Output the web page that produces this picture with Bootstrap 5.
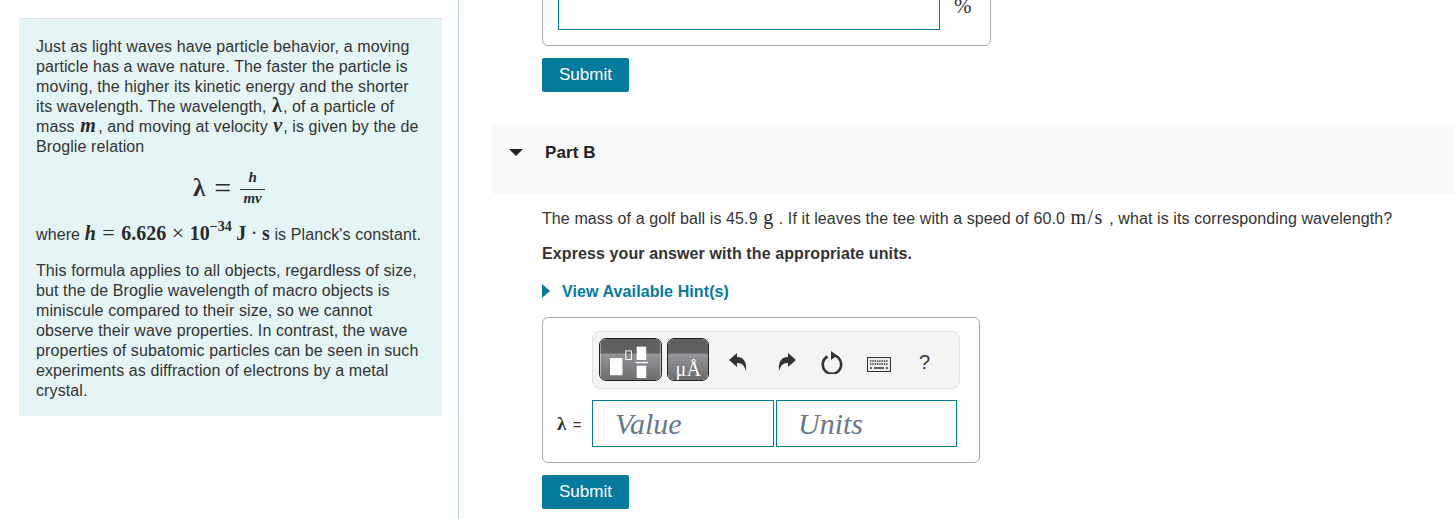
<!DOCTYPE html>
<html lang="en">
<head>
  <meta charset="UTF-8" />
  <title>Part B</title>
  <link rel="stylesheet" href="https://cdn.jsdelivr.net/npm/bootstrap@5.3.0/dist/css/bootstrap.min.css" />
  <script src="https://cdn.jsdelivr.net/npm/bootstrap@5.3.0/dist/js/bootstrap.bundle.min.js"></script>
  <style>
    html, body { height: 519px; overflow: hidden; }
    body { font-family: "Liberation Sans", Arial, sans-serif; font-size: 16px; line-height: 20px; letter-spacing: .1px; color: #333; background: #fff; }
    .side-col { width: 459px; height: 519px; flex: none; border-right: 1px solid #b8cbe0; padding: 18px 16px 0 19px; }
    .intro-panel { background: #e5f5f6; border-top: 1px solid #dce3e6; padding: 18px 15px 15px 17px; height: 398px; }
    .intro-panel p { margin: 0; }
    .tex { font-family: "Liberation Serif", "Times New Roman", serif; font-size: 20px; line-height: 0; color: #2b2b2b; letter-spacing: 0; }
    .tex-i { font-style: italic; font-weight: 700; }
    .tex-b { font-weight: 700; }
    .tex-var { margin: 0 1px; }
    .tex-wide { margin: 0 1px; letter-spacing: 1.4px; }
    .tex-op { margin: 0 2px; font-size: 22px; }
    .tex-times { margin: 0 1px; font-size: 22px; }
    .tex-sup { font-size: 14px; position: relative; top: -9px; font-weight: 700; }
    .formula { height: 68px; display: flex; justify-content: center; align-items: center; padding: 0 5px 6px 0; }
    .formula-sign { font-size: 25px; line-height: 20px; }
    .formula-eq { font-size: 30px; line-height: 20px; margin-left: 9px; }
    .formula-frac { display: inline-flex; flex-direction: column; align-items: center; width: 25px; margin-left: 9px; font-size: 15px; line-height: 17px; }
    .formula-frac > span:first-child { border-bottom: 1px solid #333; width: 100%; text-align: center; padding-bottom: 3px; }
    .formula-gap { margin-top: 16px !important; }
    .main-col { flex: 1 1 auto; min-width: 0; }
    .body-indent { margin-left: 83px; }
    .answer-box { border: 1px solid #aaa; border-radius: 6px; background: #fff; }
    .answer-top { width: 449px; height: 61px; margin-top: -15px; padding-left: 15px; }
    .answer-top .blank { width: 382px; height: 44px; border: 1px solid #047b9c; flex: none; }
    .answer-top .pct { margin-left: 14px; font-family: "Liberation Serif", serif; font-size: 21px; line-height: 20px; margin-top: 10px; }
    .submit-btn { background: #047b9c; border: 0; border-radius: 2px; color: #fff; font-size: 17px; line-height: 20px; width: 87px; height: 34px; padding: 0; }
    .submit-btn:hover { background: #047b9c; color: #fff; }
    .submit-top { margin-top: 12px; }
    .submit-bottom { margin-top: 12px; }
    .part-head { margin-top: 33px; margin-left: 33px; height: 69px; background: #f9f9f9; padding-top: 18px; font-size: 17px; font-weight: 700; color: #222; }
    .part-caret { width: 14px; height: 7px; margin: 6px 22px 0 17px; flex: none; }
    .question-line { margin: 15px 0 0; white-space: nowrap; }
    .express-line { margin: 15px 0 0; }
    .hint-row { margin-top: 18px; }
    .hint-link { color: #047b9c; font-weight: 700; text-decoration: none; margin-left: 12px; }
    .hint-caret { width: 8px; height: 14px; flex: none; margin-top: 2px; }
    .answer-main { width: 438px; height: 146px; margin-top: 15px; padding: 13px 0 0 49px; position: relative; }
    .tool-strip { width: 368px; height: 58px; background: #f4f4f4; border: 1px solid #e2e2e2; border-radius: 8px; padding: 6px 0 0 6px; }
    .tpl-btn { height: 43px; border: 1px solid #222; border-radius: 7px; flex: none; display: block; }
    .tpl-two { margin-left: 5px; }
    .tool-ico { flex: none; display: block; }
    .ico-undo { margin: 14px 0 0 20px; }
    .ico-redo { margin: 14px 0 0 31px; }
    .ico-reset { margin: 13px 0 0 25px; }
    .ico-keys { margin: 19px 0 0 24px; }
    .tool-help { width: 11px; margin: 12px 0 0 28px; font-size: 20px; line-height: 24px; color: #333; }
    .ans-row { margin-top: 11px; }
    .ans-label { position: absolute; left: 14px; top: 96px; font-size: 15px; }
    .ans-label b { font-family: "Liberation Serif", serif; font-size: 19px; margin-right: 2px; }
    .ans-input.form-control { width: 182px; height: 47px; border: 1px solid #047b9c; border-radius: 0; padding: 0 0 0 22px; font-family: "Liberation Serif", serif; font-style: italic; font-size: 30px; flex: none; background: #fff; }
    .ans-input.form-control::placeholder { color: #66788c; opacity: 1; }
    .ans-input.units-input { margin-left: 2px; width: 181px; padding-left: 21px; }
  </style>
</head>
<body>
  <div class="d-flex">
    <aside class="side-col">
      <div class="intro-panel">
        <p>Just as light waves have particle behavior, a moving particle has a wave nature. The faster the particle is moving, the higher its kinetic energy and the shorter its wavelength. The wavelength, <span class="tex tex-b tex-var">λ</span>, of a particle of mass <span class="tex tex-i tex-wide">m</span>, and moving at velocity <span class="tex tex-i tex-var">v</span>, is given by the de Broglie relation</p>
        <div class="formula tex">
          <span class="tex-b formula-sign">λ</span>
          <span class="formula-eq">=</span>
          <span class="formula-frac"><span class="tex-i">h</span><span class="tex-i">mv</span></span>
        </div>
        <p>where <span class="tex tex-i">h</span> <span class="tex tex-op">=</span> <span class="tex tex-b">6.626</span> <span class="tex tex-times">×</span> <span class="tex tex-b">10<span class="tex-sup">−34</span></span> <span class="tex tex-b">J</span> <span class="tex">·</span> <span class="tex tex-b">s</span> is Planck's constant.</p>
        <p class="formula-gap">This formula applies to all objects, regardless of size, but the de Broglie wavelength of macro objects is miniscule compared to their size, so we cannot observe their wave properties. In contrast, the wave properties of subatomic particles can be seen in such experiments as diffraction of electrons by a metal crystal.</p>
      </div>
    </aside>

    <main class="main-col">
      <div class="body-indent">
        <div class="answer-box answer-top d-flex">
          <div class="blank"></div>
          <span class="pct">%</span>
        </div>
        <button type="button" class="btn submit-btn d-block submit-top">Submit</button>
      </div>

      <div class="part-head d-flex">
        <svg class="part-caret" viewBox="0 0 14 7"><path d="M0 0H14L7 7Z" fill="#222" /></svg>
        <span>Part B</span>
      </div>

      <div class="body-indent">
        <p class="question-line">The mass of a golf ball is 45.9 <span class="tex tex-var">g</span> . If it leaves the tee with a speed of 60.0 <span class="tex tex-wide">m/s</span> , what is its corresponding wavelength?</p>
        <p class="express-line fw-bold">Express your answer with the appropriate units.</p>
        <div class="d-flex hint-row">
          <svg class="hint-caret" viewBox="0 0 8 14"><path d="M0 0L8 7L0 14Z" fill="#047b9c" /></svg>
          <a href="#" class="hint-link">View Available Hint(s)</a>
        </div>

        <div class="answer-box answer-main">
          <div class="tool-strip d-flex">
            <svg class="tpl-btn" width="63" height="43" viewBox="0 0 63 43">
              <defs>
                <linearGradient id="tplBg" x1="0" y1="0" x2="0" y2="1">
                  <stop offset="0" stop-color="#5d5d5d" /><stop offset=".35" stop-color="#626262" />
                  <stop offset=".36" stop-color="#969499" /><stop offset="1" stop-color="#6d6d70" />
                </linearGradient>
              </defs>
              <rect width="63" height="43" fill="url(#tplBg)" />
              <rect x="10" y="20" width="13" height="18" fill="#fff" />
              <rect x="26.5" y="12.5" width="6" height="9" fill="none" stroke="#fff" />
              <rect x="38" y="8" width="10" height="14" fill="#fff" />
              <rect x="37" y="24" width="13" height="1.5" fill="#fff" />
              <rect x="38" y="28" width="10" height="13" fill="#fff" />
            </svg>
            <svg class="tpl-btn tpl-two" width="42" height="43" viewBox="0 0 42 43">
              <rect width="42" height="43" fill="url(#tplBg)" />
              <text x="8" y="39" fill="#fff" font-family="Liberation Serif" font-size="21">μÅ</text>
            </svg>
            <svg class="tool-ico ico-undo" width="18" height="20" viewBox="0 0 18 20"><path d="M0 8L8 1V5C14 5 18 9 17 19C15 13 13 11 8 11V15Z" fill="#333" /></svg>
            <svg class="tool-ico ico-redo" width="18" height="20" viewBox="0 0 18 20"><path d="M18 8L10 1V5C4 5 0 9 1 19C3 13 5 11 10 11V15Z" fill="#333" /></svg>
            <svg class="tool-ico ico-reset" width="22" height="23" viewBox="0 0 22 23"><path d="M6.5 5.5A9.2 9.2 0 1 0 13 4.6" fill="none" stroke="#333" stroke-width="2.6" /><path d="M10 0L16 4.5L10 9Z" fill="#333" /></svg>
            <svg class="tool-ico ico-keys" width="24" height="15" viewBox="0 0 24 15">
              <rect x=".5" y=".5" width="23" height="14" fill="#eee" stroke="#333" />
              <path d="M3 4H21M3 7H21" stroke="#333" stroke-width="1.6" stroke-dasharray="1.4 .9" fill="none" />
              <path d="M3 11H5M7 11H17M19 11H21" stroke="#333" stroke-width="1.6" fill="none" />
            </svg>
            <span class="tool-help">?</span>
          </div>
          <span class="ans-label"><b>λ</b> =</span>
          <div class="d-flex ans-row">
            <input class="form-control ans-input" type="text" placeholder="Value" />
            <input class="form-control ans-input units-input" type="text" placeholder="Units" />
          </div>
        </div>
        <button type="button" class="btn submit-btn d-block submit-bottom">Submit</button>
      </div>
    </main>
  </div>
</body>
</html>
